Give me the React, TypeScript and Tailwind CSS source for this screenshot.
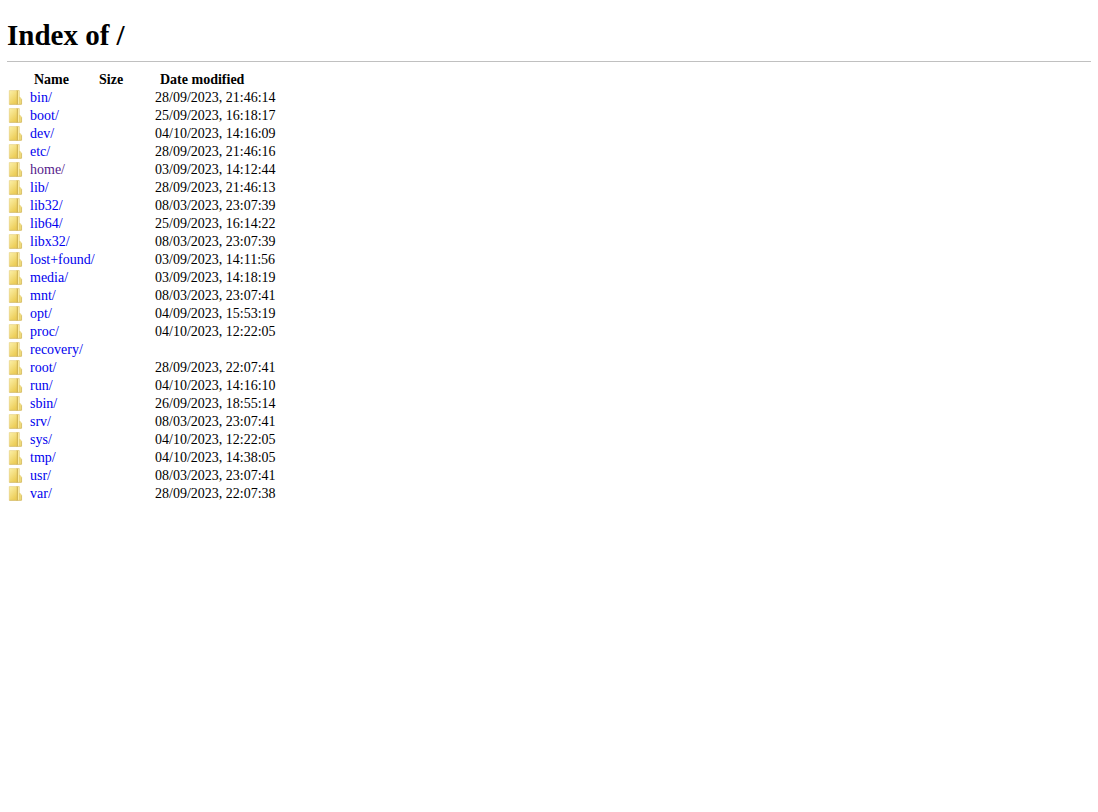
import React from 'react';

interface Entry {
  name: string;
  modified: string;
  visited?: boolean;
}

const entries: Entry[] = [
  { name: 'bin/', modified: '28/09/2023, 21:46:14' },
  { name: 'boot/', modified: '25/09/2023, 16:18:17' },
  { name: 'dev/', modified: '04/10/2023, 14:16:09' },
  { name: 'etc/', modified: '28/09/2023, 21:46:16' },
  { name: 'home/', modified: '03/09/2023, 14:12:44', visited: true },
  { name: 'lib/', modified: '28/09/2023, 21:46:13' },
  { name: 'lib32/', modified: '08/03/2023, 23:07:39' },
  { name: 'lib64/', modified: '25/09/2023, 16:14:22' },
  { name: 'libx32/', modified: '08/03/2023, 23:07:39' },
  { name: 'lost+found/', modified: '03/09/2023, 14:11:56' },
  { name: 'media/', modified: '03/09/2023, 14:18:19' },
  { name: 'mnt/', modified: '08/03/2023, 23:07:41' },
  { name: 'opt/', modified: '04/09/2023, 15:53:19' },
  { name: 'proc/', modified: '04/10/2023, 12:22:05' },
  { name: 'recovery/', modified: '' },
  { name: 'root/', modified: '28/09/2023, 22:07:41' },
  { name: 'run/', modified: '04/10/2023, 14:16:10' },
  { name: 'sbin/', modified: '26/09/2023, 18:55:14' },
  { name: 'srv/', modified: '08/03/2023, 23:07:41' },
  { name: 'sys/', modified: '04/10/2023, 12:22:05' },
  { name: 'tmp/', modified: '04/10/2023, 14:38:05' },
  { name: 'usr/', modified: '08/03/2023, 23:07:41' },
  { name: 'var/', modified: '28/09/2023, 22:07:38' },
];

const FolderIcon = () => (
  <svg className="block h-4 w-4" viewBox="0 0 16 16" aria-hidden="true">
    {/* back cover */}
    <path d="M8.5 0.6h2.8v5.8l2.3 2.8v5H8.5z" fill="#f3df80" stroke="#dcc263" strokeWidth="0.5" />
    <path d="M11.2 7.2v6.6" stroke="#e2c85f" strokeWidth="0.6" />
    <path d="M13.3 9.4v4.8" stroke="#cdb052" strokeWidth="0.6" />
    {/* front cover */}
    <path d="M1.3 0.6h8v13.7h-8z" fill="url(#folder-front)" stroke="#e3cb76" strokeWidth="0.6" />
    <path d="M9.4 0.8v13.4" stroke="#bd9c35" strokeWidth="0.8" />
    <path d="M10.3 1v13" stroke="#fff3b4" strokeWidth="0.8" />
    <path d="M1.4 14.4h12" stroke="#c9ac50" strokeWidth="0.5" />
  </svg>
);

export default function App() {
  return (
    <main className="px-[7px] pt-[18px] font-['Liberation_Serif',serif] text-sm leading-[18px] text-black">
      {/* gradient shared by all the folder icons */}
      <svg className="absolute h-0 w-0" aria-hidden="true">
        <defs>
          <linearGradient id="folder-front" x1="0" y1="0" x2="0.6" y2="1">
            <stop offset="0" stopColor="#fbf0a8" />
            <stop offset="1" stopColor="#eccc55" />
          </linearGradient>
        </defs>
      </svg>
      <h1 className="border-b border-[#c0c0c0] pb-[9px] text-[29px] leading-[34px] font-bold">Index of /</h1>
      <table className="mt-[9px] border-collapse">
        <thead>
          <tr className="text-left">
            <th className="w-[23px] p-0"></th>
            <th className="min-w-[68px] p-0 pl-1">Name</th>
            <th className="w-[57px] min-w-[57px] p-0 pl-px">Size</th>
            <th className="p-0 pl-[5px]">Date modified</th>
          </tr>
        </thead>
        <tbody>
          {entries.map((entry) => (
            <tr key={entry.name}>
              <td className="w-[23px] min-w-[23px] py-px pr-0 pl-px">
                <FolderIcon />
              </td>
              <td className="p-0 whitespace-nowrap">
                <a
                  href={`#${entry.name}`}
                  className={entry.visited ? 'text-[#551a8b]' : 'text-[#0000ee]'}
                >
                  {entry.name}
                </a>
              </td>
              <td className="p-0"></td>
              <td className="p-0 whitespace-nowrap">{entry.modified}</td>
            </tr>
          ))}
        </tbody>
      </table>
    </main>
  );
}
